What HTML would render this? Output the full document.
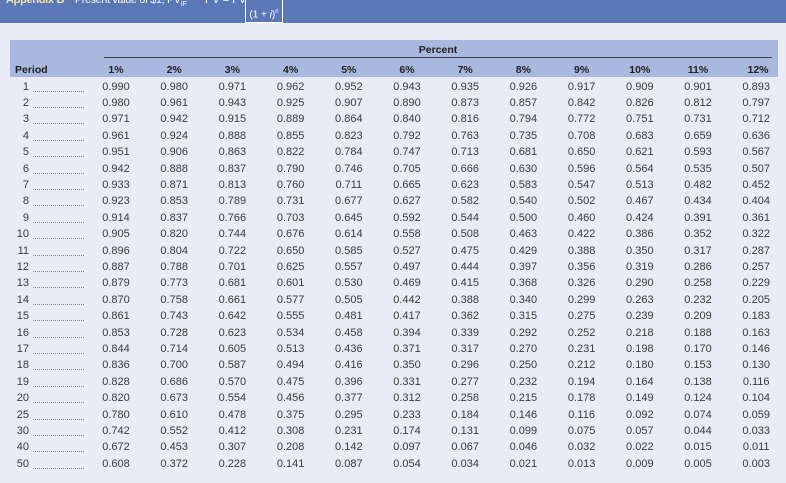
<!DOCTYPE html>
<html><head><meta charset="utf-8"><style>
body{margin:0;width:786px;height:483px;background:#e9ebf6;font-family:"Liberation Sans",sans-serif;overflow:hidden;position:relative}
.bar{position:absolute;left:0;top:0;width:786px;height:23px;background:#5a78b6}
.t{position:absolute;top:-6px;font-size:11px;color:#fff;white-space:nowrap}
.band{position:absolute;left:10px;top:40px;width:768px;height:37px;background:#a8b8df}
.line{position:absolute;left:104px;top:57px;width:668px;height:1px;background:#3a4050}
.h{position:absolute;font-size:10.5px;font-weight:bold;color:#222;text-align:center;width:58px}
.row{position:absolute;left:0;height:16px;width:786px;font-size:11px;color:#3a3a3a}
.row span{position:absolute;top:0;width:58px;text-align:center}
.row .p{left:0;width:29px;text-align:right}
.row .d{left:33px;width:51px;top:10px;border-bottom:1px dotted #888;height:0}
</style></head><body>
<div class="bar"></div>
<div class="t" style="left:6px;color:#f3e4a2;font-weight:bold;letter-spacing:-0.3px">Appendix B</div>
<div class="t" style="left:75px;font-size:10.5px;letter-spacing:-0.2px">Present value of $1, PV<sub style="font-size:7px">IF</sub></div>
<div class="t" style="left:205px;font-size:11px">PV = FV</div>
<div style="position:absolute;left:245px;top:-2px;width:38px;border:1px solid #fff;border-top:none;color:#fff;font-size:10px;line-height:12px;padding-top:8px;text-align:center;box-sizing:border-box;height:25px">(1 + <i>i</i>)<sup style="font-size:6px">n</sup></div>
<div class="band"></div>
<div class="line"></div>
<div class="h" style="left:409px;top:44px">Percent</div>
<div class="h" style="left:15px;top:64px;text-align:left">Period</div>
<div class="h" style="left:87px;top:64px">1%</div><div class="h" style="left:145.2px;top:64px">2%</div><div class="h" style="left:203.4px;top:64px">3%</div><div class="h" style="left:261.6px;top:64px">4%</div><div class="h" style="left:319.8px;top:64px">5%</div><div class="h" style="left:378px;top:64px">6%</div><div class="h" style="left:436.2px;top:64px">7%</div><div class="h" style="left:494.4px;top:64px">8%</div><div class="h" style="left:552.6px;top:64px">9%</div><div class="h" style="left:610.8px;top:64px">10%</div><div class="h" style="left:669px;top:64px">11%</div><div class="h" style="left:729px;top:64px">12%</div>
<div id="rows">
</div>
<script>
var d=[
[1,"0.990 0.980 0.971 0.962 0.952 0.943 0.935 0.926 0.917 0.909 0.901 0.893"],
[2,"0.980 0.961 0.943 0.925 0.907 0.890 0.873 0.857 0.842 0.826 0.812 0.797"],
[3,"0.971 0.942 0.915 0.889 0.864 0.840 0.816 0.794 0.772 0.751 0.731 0.712"],
[4,"0.961 0.924 0.888 0.855 0.823 0.792 0.763 0.735 0.708 0.683 0.659 0.636"],
[5,"0.951 0.906 0.863 0.822 0.784 0.747 0.713 0.681 0.650 0.621 0.593 0.567"],
[6,"0.942 0.888 0.837 0.790 0.746 0.705 0.666 0.630 0.596 0.564 0.535 0.507"],
[7,"0.933 0.871 0.813 0.760 0.711 0.665 0.623 0.583 0.547 0.513 0.482 0.452"],
[8,"0.923 0.853 0.789 0.731 0.677 0.627 0.582 0.540 0.502 0.467 0.434 0.404"],
[9,"0.914 0.837 0.766 0.703 0.645 0.592 0.544 0.500 0.460 0.424 0.391 0.361"],
[10,"0.905 0.820 0.744 0.676 0.614 0.558 0.508 0.463 0.422 0.386 0.352 0.322"],
[11,"0.896 0.804 0.722 0.650 0.585 0.527 0.475 0.429 0.388 0.350 0.317 0.287"],
[12,"0.887 0.788 0.701 0.625 0.557 0.497 0.444 0.397 0.356 0.319 0.286 0.257"],
[13,"0.879 0.773 0.681 0.601 0.530 0.469 0.415 0.368 0.326 0.290 0.258 0.229"],
[14,"0.870 0.758 0.661 0.577 0.505 0.442 0.388 0.340 0.299 0.263 0.232 0.205"],
[15,"0.861 0.743 0.642 0.555 0.481 0.417 0.362 0.315 0.275 0.239 0.209 0.183"],
[16,"0.853 0.728 0.623 0.534 0.458 0.394 0.339 0.292 0.252 0.218 0.188 0.163"],
[17,"0.844 0.714 0.605 0.513 0.436 0.371 0.317 0.270 0.231 0.198 0.170 0.146"],
[18,"0.836 0.700 0.587 0.494 0.416 0.350 0.296 0.250 0.212 0.180 0.153 0.130"],
[19,"0.828 0.686 0.570 0.475 0.396 0.331 0.277 0.232 0.194 0.164 0.138 0.116"],
[20,"0.820 0.673 0.554 0.456 0.377 0.312 0.258 0.215 0.178 0.149 0.124 0.104"],
[25,"0.780 0.610 0.478 0.375 0.295 0.233 0.184 0.146 0.116 0.092 0.074 0.059"],
[30,"0.742 0.552 0.412 0.308 0.231 0.174 0.131 0.099 0.075 0.057 0.044 0.033"],
[40,"0.672 0.453 0.307 0.208 0.142 0.097 0.067 0.046 0.032 0.022 0.015 0.011"],
[50,"0.608 0.372 0.228 0.141 0.087 0.054 0.034 0.021 0.013 0.009 0.005 0.003"]];
var h="";
d.forEach(function(r,i){
 h+='<div class="row" style="top:'+(80.5+i*16.4)+'px"><span class="p">'+r[0]+'</span><span class="d"></span>';
 r[1].split(" ").forEach(function(v,j){h+='<span style="left:'+(87+j*58.2)+'px">'+v+'</span>';});
 h+='</div>';
});
document.getElementById("rows").innerHTML=h;
</script>
</body></html>
